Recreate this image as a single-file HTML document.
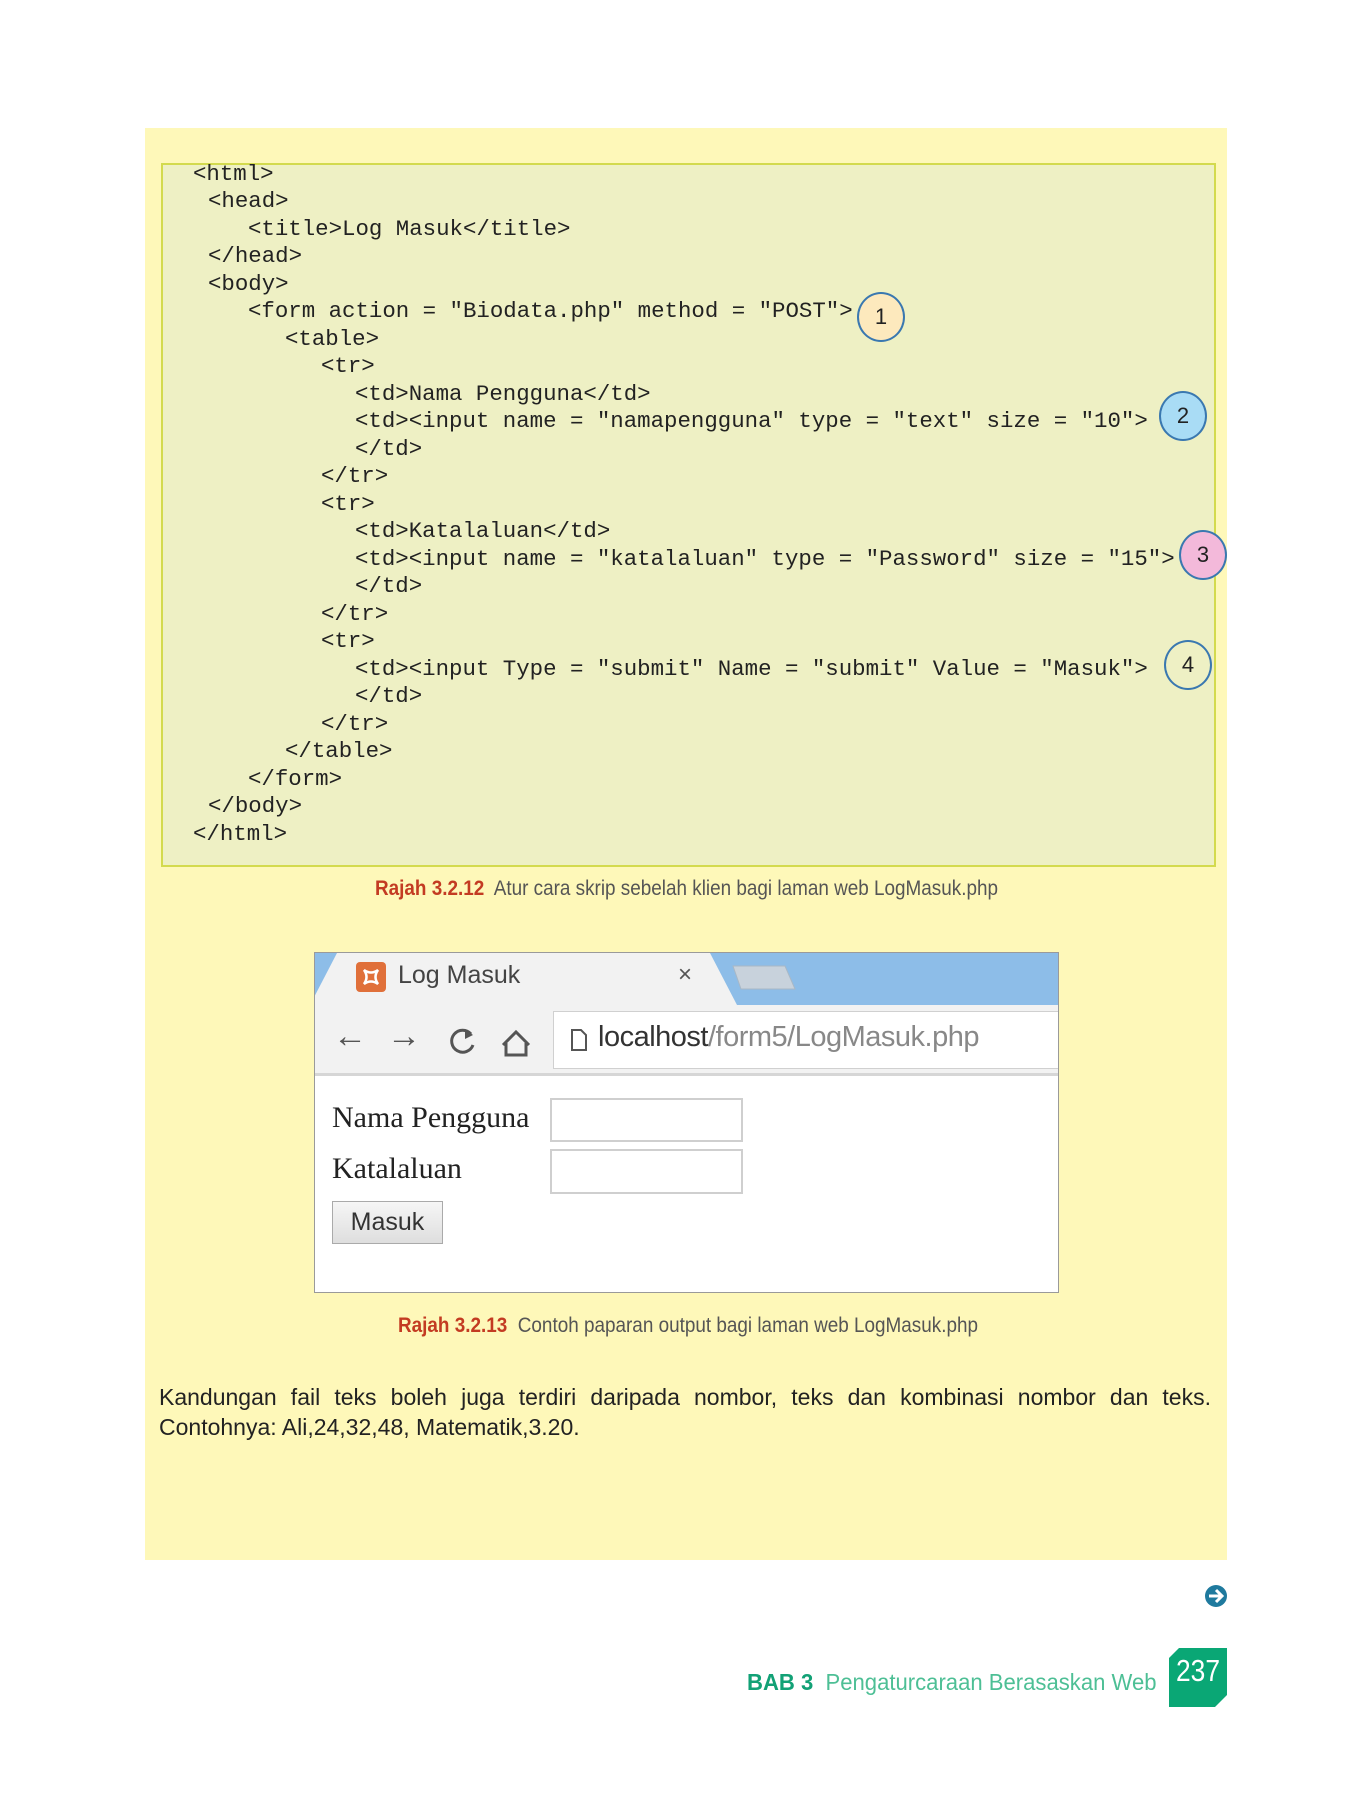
<!DOCTYPE html>
<html><head><meta charset="utf-8"><style>
*{margin:0;padding:0;box-sizing:border-box}
body{width:1353px;height:1800px;background:#fff;position:relative;overflow:hidden;font-family:"Liberation Sans",sans-serif}
.abs{position:absolute}
#yel{left:145px;top:128px;width:1082px;height:1432px;background:#fef8b9}
#code{left:161px;top:163px;width:1055px;height:704px;background:#eef0c4;border:2px solid #d3da4e}
.ln{position:absolute;font-family:"Liberation Mono",monospace;font-size:22.4px;line-height:27px;color:#222;white-space:pre;margin-top:3px}
.c{position:absolute;width:48px;height:50px;border:2px solid #3a78b0;border-radius:50%;text-align:center;line-height:46px;font-size:22px;color:#222}
.cap{position:absolute;font-size:21px;color:#555;white-space:nowrap;transform:scaleX(0.9);transform-origin:left top}
.cap b{color:#c33b22}
#br{left:314px;top:952px;width:745px;height:341px;border:1px solid #9a9a9a;background:#fff;overflow:hidden}
.lab{position:absolute;font-family:"Liberation Serif",serif;font-size:30px;color:#222}
.inp{position:absolute;border:2px solid #cfcfcf;background:#fff}
</style></head><body>
<div id="yel" class="abs"></div>
<div id="code" class="abs"></div>
<div class="ln" style="left:193px;top:158px">&lt;html&gt;</div>
<div class="ln" style="left:208px;top:185px">&lt;head&gt;</div>
<div class="ln" style="left:248px;top:213px">&lt;title&gt;Log Masuk&lt;/title&gt;</div>
<div class="ln" style="left:208px;top:240px">&lt;/head&gt;</div>
<div class="ln" style="left:208px;top:268px">&lt;body&gt;</div>
<div class="ln" style="left:248px;top:295px">&lt;form action = "Biodata.php" method = "POST"&gt;</div>
<div class="ln" style="left:285px;top:323px">&lt;table&gt;</div>
<div class="ln" style="left:321px;top:350px">&lt;tr&gt;</div>
<div class="ln" style="left:355px;top:378px">&lt;td&gt;Nama Pengguna&lt;/td&gt;</div>
<div class="ln" style="left:355px;top:405px">&lt;td&gt;&lt;input name = "namapengguna" type = "text" size = "10"&gt;</div>
<div class="ln" style="left:355px;top:433px">&lt;/td&gt;</div>
<div class="ln" style="left:321px;top:460px">&lt;/tr&gt;</div>
<div class="ln" style="left:321px;top:488px">&lt;tr&gt;</div>
<div class="ln" style="left:355px;top:515px">&lt;td&gt;Katalaluan&lt;/td&gt;</div>
<div class="ln" style="left:355px;top:543px">&lt;td&gt;&lt;input name = "katalaluan" type = "Password" size = "15"&gt;</div>
<div class="ln" style="left:355px;top:570px">&lt;/td&gt;</div>
<div class="ln" style="left:321px;top:598px">&lt;/tr&gt;</div>
<div class="ln" style="left:321px;top:625px">&lt;tr&gt;</div>
<div class="ln" style="left:355px;top:653px">&lt;td&gt;&lt;input Type = "submit" Name = "submit" Value = "Masuk"&gt;</div>
<div class="ln" style="left:355px;top:680px">&lt;/td&gt;</div>
<div class="ln" style="left:321px;top:708px">&lt;/tr&gt;</div>
<div class="ln" style="left:285px;top:735px">&lt;/table&gt;</div>
<div class="ln" style="left:248px;top:763px">&lt;/form&gt;</div>
<div class="ln" style="left:208px;top:790px">&lt;/body&gt;</div>
<div class="ln" style="left:193px;top:818px">&lt;/html&gt;</div>
<div class="c" style="left:857px;top:292px;background:#fde9bd">1</div>
<div class="c" style="left:1159px;top:391px;background:#a9dcf5">2</div>
<div class="c" style="left:1179px;top:530px;background:#f3b9da">3</div>
<div class="c" style="left:1164px;top:640px;background:transparent">4</div>
<div class="cap" style="left:375px;top:877px"><b>Rajah 3.2.12</b>&nbsp; Atur cara skrip sebelah klien bagi laman web LogMasuk.php</div>

<div id="br" class="abs">
 <div class="abs" style="left:0;top:0;width:745px;height:52px;background:#8dbde8"></div>
 <svg class="abs" style="left:0;top:0" width="745" height="52"><polygon points="-5,52 22,0 395,0 422,52" fill="#f2f2f2"/><polygon points="418,13 470,13 480,36 426,36" fill="#c8d2dc" stroke="#a9b8c6"/></svg>
 <div class="abs" style="left:41px;top:9px;width:30px;height:30px;background:#e0703a;border-radius:4px"></div>
 <svg class="abs" style="left:41px;top:9px" width="30" height="30"><path d="M8 8 Q15 13 22 8 Q17 15 22 22 Q15 17 8 22 Q13 15 8 8Z" fill="none" stroke="#fff" stroke-width="2.5"/></svg>
 <div class="abs" style="left:83px;top:8px;font-size:25px;color:#444">Log Masuk</div>
 <div class="abs" style="left:363px;top:8px;font-size:24px;color:#555">×</div>
 <div class="abs" style="left:0;top:52px;width:745px;height:71px;background:#f2f2f2;border-bottom:3px solid #d6d6d6"></div>
 <div class="abs" style="left:18px;top:64px;font-size:34px;color:#555;letter-spacing:20px">←→</div>
 <svg class="abs" style="left:130px;top:72px" width="90" height="34"><path d="M26 9 A11 11 0 1 0 28 20" fill="none" stroke="#555" stroke-width="3"/><path d="M20 4 L28 10 L20 14" fill="#555"/><path d="M58 20 L71 7 L84 20 M61 18 V30 H81 V18" fill="none" stroke="#555" stroke-width="3"/></svg>
 <div class="abs" style="left:238px;top:58px;width:507px;height:58px;background:#fff;border:1px solid #d0d0d0"></div>
 <svg class="abs" style="left:255px;top:75px" width="18" height="24"><path d="M2 2 H11 L16 7 V22 H2 Z" fill="none" stroke="#555" stroke-width="2"/></svg>
 <div class="abs" style="left:283px;top:68px;font-size:29px;color:#333;letter-spacing:-0.5px">localhost<span style="color:#888">/form5/LogMasuk.php</span></div>
 <div class="lab" style="left:17px;top:148px">Nama Pengguna</div>
 <div class="lab" style="left:17px;top:199px">Katalaluan</div>
 <div class="inp" style="left:235px;top:145px;width:193px;height:44px"></div>
 <div class="inp" style="left:235px;top:196px;width:193px;height:45px"></div>
 <div class="abs" style="left:17px;top:248px;width:111px;height:43px;border:1px solid #aaa;background:linear-gradient(#f6f6f6,#dedede);font-size:25px;color:#333;text-align:center;line-height:41px">Masuk</div>
</div>
<div class="cap" style="left:398px;top:1314px"><b>Rajah 3.2.13</b>&nbsp; Contoh paparan output bagi laman web LogMasuk.php</div>
<div class="abs" style="left:159px;top:1382px;width:1052px;font-size:23px;line-height:30px;color:#222;text-align:justify;text-align-last:justify">Kandungan fail teks boleh juga terdiri daripada nombor, teks dan kombinasi nombor dan teks.</div>
<div class="abs" style="left:159px;top:1412px;width:1052px;font-size:23px;line-height:30px;color:#222">Contohnya: Ali,24,32,48, Matematik,3.20.</div>
<svg class="abs" style="left:1204px;top:1584px" width="24" height="24"><circle cx="12" cy="12" r="11" fill="#1f7a9e"/><path d="M5 12 H17 M12 6 L18 12 L12 18" fill="none" stroke="#fff" stroke-width="3"/></svg>
<div class="abs" style="left:747px;top:1669px;font-size:23px;white-space:nowrap;color:#4dbf95;transform:scaleX(0.96);transform-origin:left top"><b style="color:#12a176">BAB 3</b>&nbsp; Pengaturcaraan Berasaskan Web</div>
<svg class="abs" style="left:1169px;top:1648px" width="58" height="59"><polygon points="10,0 58,0 58,47 46,59 0,59 0,10" fill="#0aa775"/></svg>
<div class="abs" style="left:1169px;top:1653px;width:58px;text-align:center;font-size:31px;color:#fff;transform:scaleX(0.85)">237</div>
</body></html>
